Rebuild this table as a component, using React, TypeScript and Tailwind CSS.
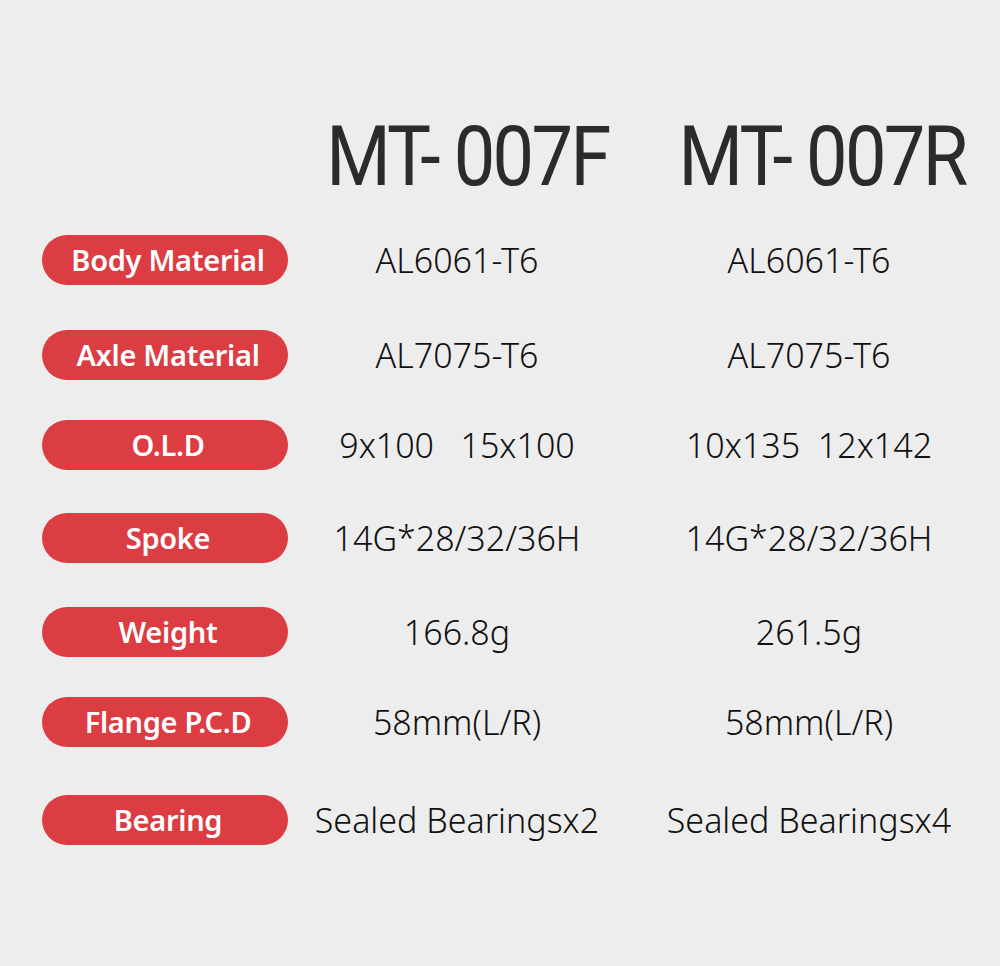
import React from 'react';

interface SpecRow {
  label: string;
  front: string;
  rear: string;
  top: string;
}

const rows: SpecRow[] = [
  { label: 'Body Material', front: 'AL6061-T6', rear: 'AL6061-T6', top: 'mt-[28px]' },
  { label: 'Axle Material', front: 'AL7075-T6', rear: 'AL7075-T6', top: 'mt-[45px]' },
  { label: 'O.L.D', front: '9x100\u00a0\u00a0 15x100', rear: '10x135\u00a0 12x142', top: 'mt-[40px]' },
  { label: 'Spoke', front: '14G*28/32/36H', rear: '14G*28/32/36H', top: 'mt-[43px]' },
  { label: 'Weight', front: '166.8g', rear: '261.5g', top: 'mt-[44px]' },
  { label: 'Flange P.C.D', front: '58mm(L/R)', rear: '58mm(L/R)', top: 'mt-[40px]' },
  { label: 'Bearing', front: 'Sealed Bearingsx2', rear: 'Sealed Bearingsx4', top: 'mt-[48px]' },
];

export default function App() {
  return (
    <div className="w-[1000px] h-[966px] bg-[#ededed] overflow-hidden font-['Noto_Sans',sans-serif]">
      <div className="flex pt-[107px] pl-[288px]">
        <div className="w-[338px] flex justify-center pl-[20px]">
          <h1 className="whitespace-nowrap scale-x-[0.88] text-[84px] leading-[100px] font-normal text-[#2b2b2b] tracking-[-3px] font-[Roboto]">MT- 007F</h1>
        </div>
        <div className="w-[366px] flex justify-center pl-[26px]">
          <h1 className="whitespace-nowrap scale-x-[0.88] text-[84px] leading-[100px] font-normal text-[#2b2b2b] tracking-[-3px] font-[Roboto]">MT- 007R</h1>
        </div>
      </div>

      <div className="flex flex-col">
        {rows.map((r) => (
          <div key={r.label} className={`flex items-center h-[50px] ${r.top}`}>
            <div className="ml-[42px] w-[246px] h-[50px] rounded-full bg-[#dc3d43] flex items-center justify-center pl-[6px]">
              <span className="text-white font-semibold text-[29px] tracking-[-0.3px]">{r.label}</span>
            </div>
            <div className="w-[338px] whitespace-nowrap text-center text-[34px] text-[#111] font-light">{r.front}</div>
            <div className="w-[366px] whitespace-nowrap text-center text-[34px] text-[#111] font-light">{r.rear}</div>
          </div>
        ))}
      </div>
    </div>
  );
}
